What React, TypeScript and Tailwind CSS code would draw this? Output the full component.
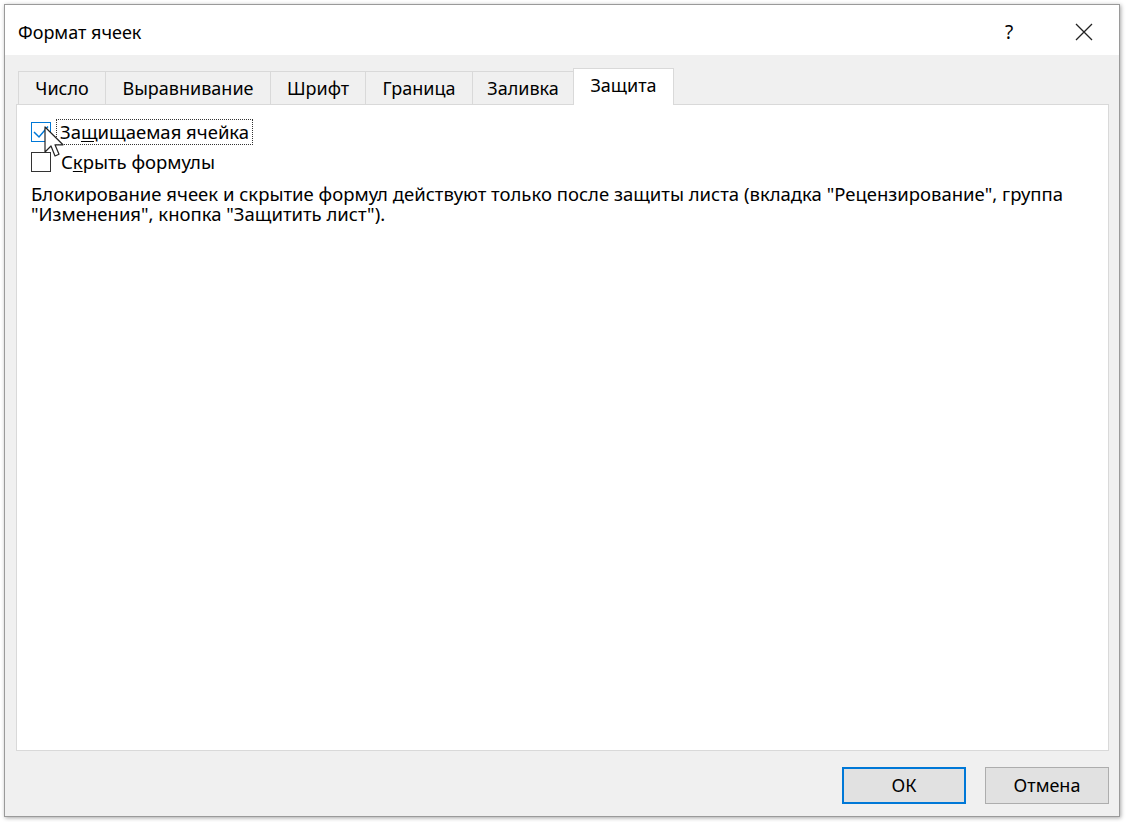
import React from "react";

const tabs = ["Число", "Выравнивание", "Шрифт", "Граница", "Заливка"];
const tabW = [87, 165, 95, 107, 101];

export default function App() {
  return (
    <div className="w-[1126px] h-[822px] bg-white relative" style={{ fontFamily: '"Noto Sans", "Open Sans", sans-serif' }}>
      <div className="absolute left-[4px] top-[4px] w-[1116px] h-[813px] border border-[#9a9a9a] bg-[#f0f0f0] shadow-[1px_1px_4px_rgba(0,0,0,0.35)] flex flex-col">
        {/* title bar */}
        <div className="h-[50px] bg-white flex items-center pl-[13px] pr-[24px] pt-[4px] text-[18px] text-black">
          <span className="flex-1">Формат ячеек</span>
          <span className="w-[20px] text-center text-[19px] mr-[56px]">?</span>
          <svg width="18" height="18" viewBox="0 0 18 18" className="mr-[2px]">
            <path d="M1 1 L17 17 M17 1 L1 17" stroke="#222" strokeWidth="1.3" />
          </svg>
        </div>
        {/* body */}
        <div className="flex-1 flex flex-col pl-[13px] pr-[10px] pt-[12px]">
          {/* tabs */}
          <div className="flex items-end h-[37px] relative z-10">
            <div className="flex items-end">
              {tabs.map((t, i) => (
                <div
                  key={t}
                  className="h-[33px] border-t border-l border-[#d9d9d9] bg-[#f0f0f0] flex items-center justify-center text-[18px] text-black"
                  style={{ width: tabW[i] }}
                >
                  {t}
                </div>
              ))}
              <div className="w-[101px] h-[37px] bg-white border-t border-l border-r border-[#d9d9d9] flex items-center justify-center text-[18px] text-black -mb-px pb-[3px]">
                Защита
              </div>
            </div>
          </div>
          {/* panel */}
          <div className="h-[647px] bg-white border border-[#d9d9d9] -ml-[2px] relative pt-[13px] pl-[14px] pr-[20px] text-[18.5px] text-black">
            <div className="flex items-center h-[28px]">
              <div className="w-[20px] h-[20px] border border-[#0078d7] bg-white flex items-center justify-center">
                <svg width="18" height="18" viewBox="0 0 18 18">
                  <path d="M2 9 L7 14 L16 3.5" fill="none" stroke="#0078d7" strokeWidth="1.5" />
                </svg>
              </div>
              <div className="ml-[5px] px-[3px] border border-dotted border-[#333] leading-[24px]">
                За<span className="underline underline-offset-2">щ</span>ищаемая ячейка
              </div>
            </div>
            <div className="flex items-center h-[28px] mt-[2px]">
              <div className="w-[20px] h-[20px] border border-[#333] bg-white"></div>
              <div className="ml-[10px] leading-[24px]">
                С<span className="underline underline-offset-2">к</span>рыть формулы
              </div>
            </div>
            <p className="mt-[8px] leading-[20px]">
              Блокирование ячеек и скрытие формул действуют только после защиты листа (вкладка "Рецензирование", группа
              <br />
              "Изменения", кнопка "Защитить лист").
            </p>
            {/* mouse cursor */}
            <svg className="absolute left-[27px] top-[21px]" width="22" height="34" viewBox="0 0 22 34">
              <path d="M1 1 L1 26 L7 20 L11 30 L15 28.3 L11 18.8 L19 18.8 Z" fill="white" stroke="#222" strokeWidth="1.2" strokeLinejoin="round" />
            </svg>
          </div>
          {/* buttons */}
          <div className="flex justify-end items-center gap-[19px] mt-[16px]">
            <button className="w-[124px] h-[37px] bg-[#e1e1e1] border-2 border-[#0078d7] text-[18px] text-black">ОК</button>
            <button className="w-[124px] h-[37px] bg-[#e1e1e1] border border-[#adadad] text-[18px] text-black">Отмена</button>
          </div>
        </div>
      </div>
    </div>
  );
}
